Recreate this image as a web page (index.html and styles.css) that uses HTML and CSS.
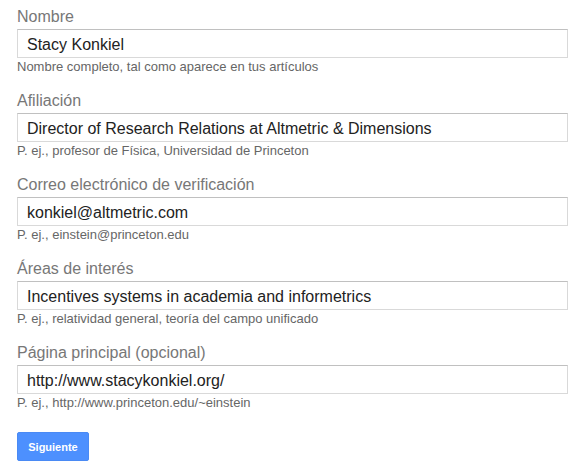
FILE: index.html
```html
<!DOCTYPE html>
<html lang="es">
<head>
<meta charset="utf-8">
<title>Perfil</title>
<link rel="stylesheet" href="styles.css">
</head>
<body>
<form class="form">
  <div class="field">
    <label class="label">Nombre</label>
    <div class="input">Stacy Konkiel</div>
    <div class="hint">Nombre completo, tal como aparece en tus artículos</div>
  </div>
  <div class="field">
    <label class="label">Afiliación</label>
    <div class="input">Director of Research Relations at Altmetric &amp; Dimensions</div>
    <div class="hint">P. ej., profesor de Física, Universidad de Princeton</div>
  </div>
  <div class="field">
    <label class="label">Correo electrónico de verificación</label>
    <div class="input">konkiel@altmetric.com</div>
    <div class="hint">P. ej., einstein@princeton.edu</div>
  </div>
  <div class="field">
    <label class="label">Áreas de interés</label>
    <div class="input">Incentives systems in academia and informetrics</div>
    <div class="hint">P. ej., relatividad general, teoría del campo unificado</div>
  </div>
  <div class="field">
    <label class="label">Página principal (opcional)</label>
    <div class="input">http://www.stacykonkiel.org/</div>
    <div class="hint">P. ej., http://www.princeton.edu/~einstein</div>
  </div>
  <div class="actions">
    <button type="button" class="btn">Siguiente</button>
  </div>
</form>
</body>
</html>
```

FILE: styles.css
```css
html, body {
  margin: 0;
  padding: 0;
  background: #fff;
}
body {
  font-family: "Liberation Sans", Arial, sans-serif;
  padding: 7px 15px 0 17px;
}
.form {
  display: flex;
  flex-direction: column;
}
.field {
  display: flex;
  flex-direction: column;
  margin-bottom: 16px;
}
.label {
  font-size: 16px;
  line-height: 19px;
  color: #777;
  margin-bottom: 3px;
}
.input {
  box-sizing: border-box;
  height: 29px;
  border: 1px solid #d9d9d9;
  border-top-color: #c0c0c0;
  padding: 3px 9px 0;
  font-size: 16px;
  line-height: 24px;
  color: #222;
  white-space: nowrap;
  overflow: hidden;
}
.hint {
  margin-top: 1px;
  font-size: 13px;
  line-height: 16px;
  color: #666;
}
.actions {
  margin-top: 5px;
  display: flex;
}
.btn {
  box-sizing: border-box;
  height: 29px;
  width: 72px;
  padding: 1px 0 0;
  border: 1px solid #4a8af4;
  border-radius: 2px;
  background: #4d90fe;
  color: #fff;
  font-family: "Liberation Sans", Arial, sans-serif;
  font-weight: bold;
  font-size: 11px;
  line-height: 26px;
}
```
